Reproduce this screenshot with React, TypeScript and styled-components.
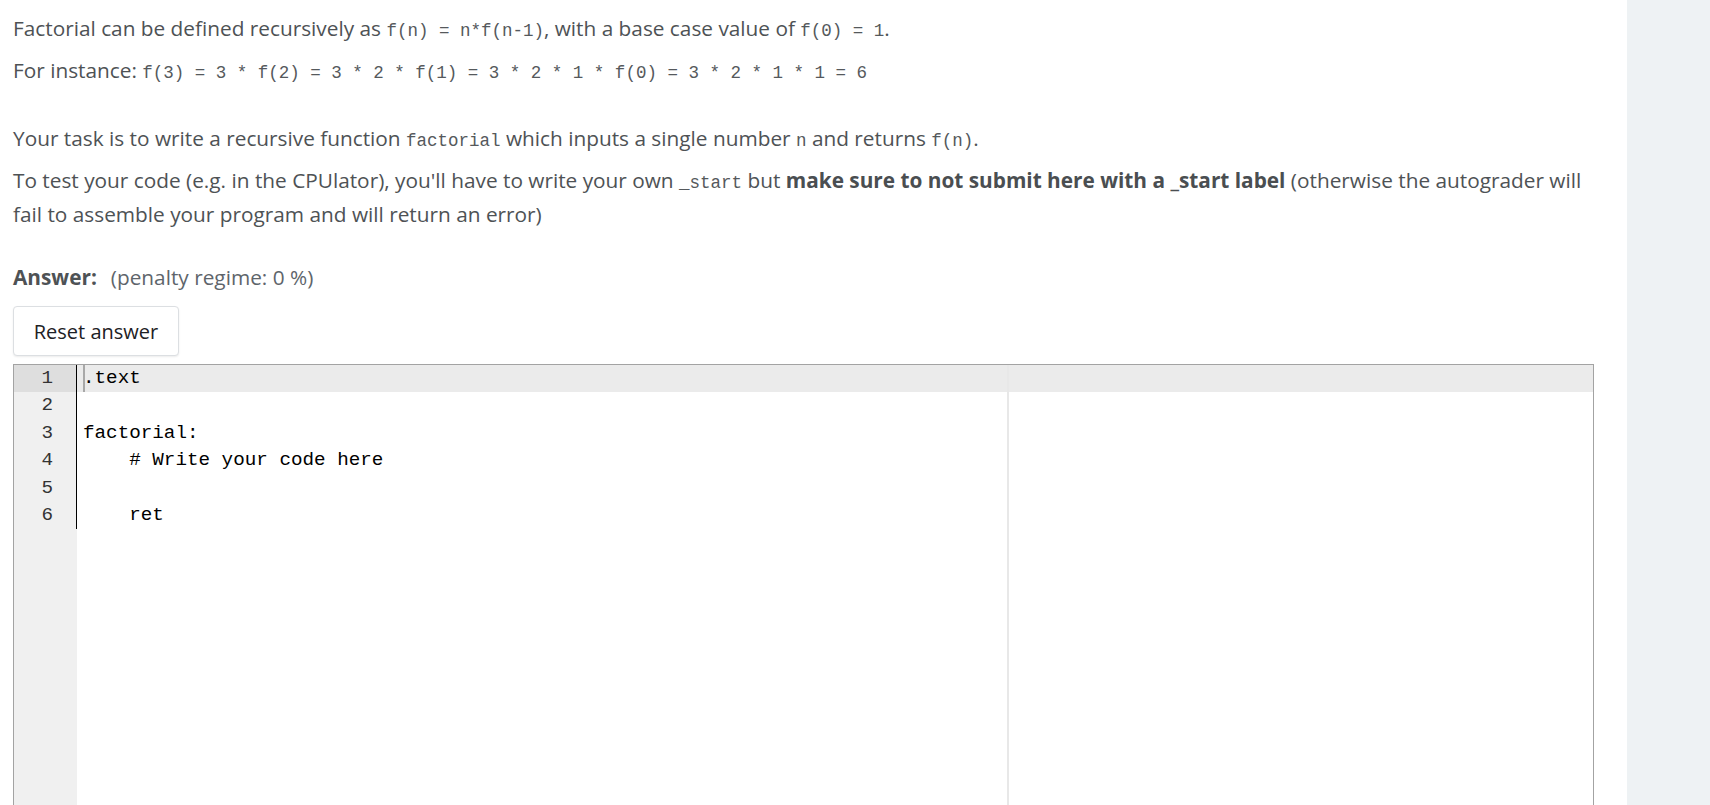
import React from 'react';
import styled, { createGlobalStyle } from 'styled-components';

const GlobalStyle = createGlobalStyle`
  html, body {
    margin: 0;
    padding: 0;
    height: 805px;
    overflow: hidden;
    background: #fff;
  }
  * { box-sizing: border-box; }
`;

const Page = styled.div`
  display: flex;
  height: 805px;
  font-family: "Open Sans", "Liberation Sans", sans-serif;
  font-size: 20.8px;
  color: #4e5255;
`;

const Main = styled.main`
  width: 1627px;
  flex-shrink: 0;
  padding: 11px 33px 0 13px;
  display: flex;
  flex-direction: column;

  & > * {
    flex-shrink: 0;
  }
`;

const Sidebar = styled.aside`
  flex: 1;
  background: #eef2f4;
`;

const Para = styled.p<{ $gapAfter?: number }>`
  margin: 0 0 ${({ $gapAfter }) => $gapAfter ?? 8}px;
  line-height: 34px;
`;

const Code = styled.code`
  font-family: "Liberation Mono", "DejaVu Sans Mono", monospace;
  font-size: 17.5px;
  line-height: 1;
  color: #55595c;
`;

const Strong = styled.strong`
  font-weight: 700;
  color: #4a4e51;
`;

const AnswerRow = styled.div`
  margin-top: 31px;
  line-height: 30px;
  color: #5e656b;
`;

const AnswerLabel = styled.span`
  font-weight: 700;
  color: #4e5255;
  margin-right: 14px;
`;

const ResetButton = styled.button`
  align-self: flex-start;
  margin-top: 14px;
  width: 166px;
  height: 50px;
  background: #fff;
  border: 1px solid #dcdfe2;
  border-radius: 4px;
  box-shadow: 0 1px 2px rgba(0, 0, 0, 0.08);
  font-family: "Open Sans", "Liberation Sans", sans-serif;
  font-size: 20px;
  color: #1d2125;
  padding: 0;
`;

const Editor = styled.div`
  position: relative;
  margin-top: 8px;
  height: 520px;
  border: 1px solid #a3a3a3;
  display: flex;
  background: #fff;
  font-family: "Liberation Mono", "DejaVu Sans Mono", monospace;
  font-size: 19.25px;
`;

const Gutter = styled.div`
  width: 63px;
  background: #f0f0f0;
  flex-shrink: 0;
`;

const GutterCell = styled.div<{ $active: boolean }>`
  height: 27.4px;
  line-height: 27.4px;
  text-align: right;
  padding-right: 23px;
  color: #333;
  background: ${({ $active }) => ($active ? '#dedede' : 'transparent')};
  border-right: 1px solid #000;
`;

const Content = styled.div`
  flex: 1;
  position: relative;
`;

const CodeLine = styled.div<{ $active: boolean }>`
  height: 27.4px;
  line-height: 27.4px;
  padding-left: 6px;
  white-space: pre;
  color: #000;
  background: ${({ $active }) => ($active ? '#ebebeb' : 'transparent')};
`;

const PrintMargin = styled.div`
  position: absolute;
  top: 0;
  bottom: 0;
  left: 930px;
  width: 2px;
  background: #e8e8e8;
`;

const Cursor = styled.div`
  position: absolute;
  top: 0;
  left: 6px;
  width: 2px;
  height: 27.4px;
  background: #a8a8a8;
`;

const lines = ['.text', '', 'factorial:', '    # Write your code here', '', '    ret'];

export default function App() {
  return (
    <>
      <GlobalStyle />
      <Page>
        <Main>
          <Para>
            Factorial can be defined recursively as <Code>f(n) = n*f(n-1)</Code>, with a base case value of{' '}
            <Code>f(0) = 1</Code>.
          </Para>
          <Para $gapAfter={34}>
            For instance: <Code>f(3) = 3 * f(2) = 3 * 2 * f(1) = 3 * 2 * 1 * f(0) = 3 * 2 * 1 * 1 = 6</Code>
          </Para>
          <Para>
            Your task is to write a recursive function <Code>factorial</Code> which inputs a single number{' '}
            <Code>n</Code> and returns <Code>f(n)</Code>.
          </Para>
          <Para $gapAfter={0}>
            To test your code (e.g. in the CPUlator), you'll have to write your own <Code>_start</Code> but{' '}
            <Strong>make sure to not submit here with a _start label</Strong> (otherwise the autograder will fail to
            assemble your program and will return an error)
          </Para>
          <AnswerRow>
            <AnswerLabel>Answer:</AnswerLabel>(penalty regime: 0 %)
          </AnswerRow>
          <ResetButton type="button">Reset answer</ResetButton>
          <Editor>
            <Gutter>
              {lines.map((_, i) => (
                <GutterCell key={i} $active={i === 0}>
                  {i + 1}
                </GutterCell>
              ))}
            </Gutter>
            <Content>
              <PrintMargin />
              {lines.map((line, i) => (
                <CodeLine key={i} $active={i === 0}>
                  {line}
                </CodeLine>
              ))}
              <Cursor />
            </Content>
          </Editor>
        </Main>
        <Sidebar />
      </Page>
    </>
  );
}
